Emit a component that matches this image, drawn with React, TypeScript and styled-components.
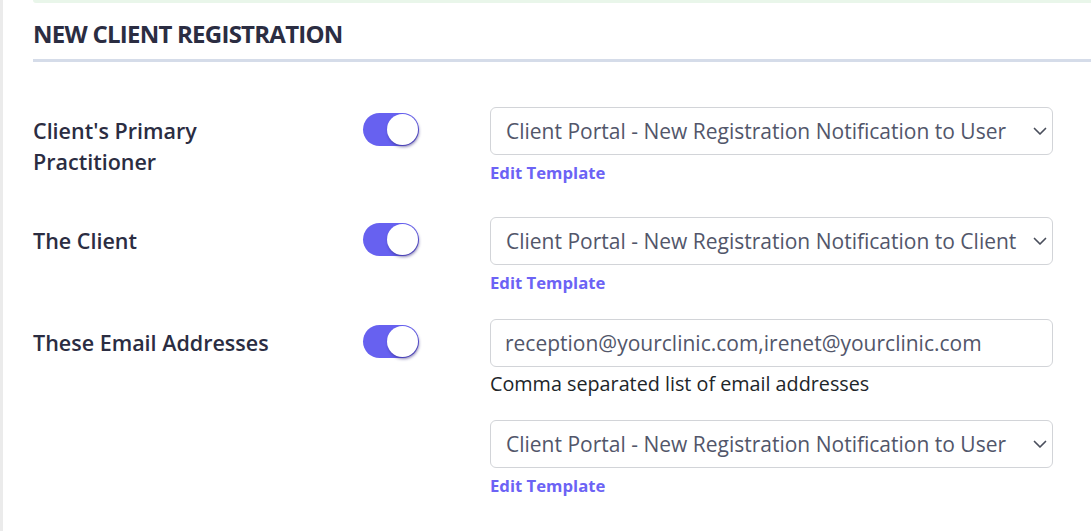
import styled, { createGlobalStyle } from "styled-components";

const GlobalStyle = createGlobalStyle`
  html, body {
    margin: 0;
    padding: 0;
    background: #ffffff;
  }
  body {
    font-family: "Open Sans", "Noto Sans", "Liberation Sans", sans-serif;
    color: #2b2d42;
  }
`;

interface Recipient {
  label: string;
  enabled: boolean;
  emails?: string;
  template: string;
}

const recipients: Recipient[] = [
  {
    label: "Client's Primary Practitioner",
    enabled: true,
    template: "Client Portal - New Registration Notification to User",
  },
  {
    label: "The Client",
    enabled: true,
    template: "Client Portal - New Registration Notification to Client",
  },
  {
    label: "These Email Addresses",
    enabled: true,
    emails: "reception@yourclinic.com,irenet@yourclinic.com",
    template: "Client Portal - New Registration Notification to User",
  },
];

function Chevron() {
  return (
    <ChevronIcon viewBox="0 0 16 16" width="16" height="16" aria-hidden>
      <path
        d="M2.5 5.5 8 11l5.5-5.5"
        fill="none"
        stroke="#4a4f5c"
        strokeWidth="1.7"
        strokeLinecap="round"
        strokeLinejoin="round"
      />
    </ChevronIcon>
  );
}

function TemplatePicker({ value }: { value: string }) {
  return (
    <>
      <SelectWrap>
        <Select defaultValue={value}>
          <option>{value}</option>
        </Select>
        <Chevron />
      </SelectWrap>
      <EditLink href="#">Edit Template</EditLink>
    </>
  );
}

function RecipientRow({ item }: { item: Recipient }) {
  return (
    <Row>
      <Label>{item.label}</Label>
      <Switch $on={item.enabled}>
        <Knob />
      </Switch>
      <Controls>
        {item.emails !== undefined && (
          <>
            <TextInput defaultValue={item.emails} />
            <HelpText>Comma separated list of email addresses</HelpText>
          </>
        )}
        <TemplatePicker value={item.template} />
      </Controls>
    </Row>
  );
}

export default function App() {
  return (
    <>
      <GlobalStyle />
      <Page>
        <PrevCardEdge />
        <Section>
          <Heading>NEW CLIENT REGISTRATION</Heading>
          <Rows>
            {recipients.map((r) => (
              <RecipientRow key={r.label} item={r} />
            ))}
          </Rows>
        </Section>
      </Page>
    </>
  );
}

const Page = styled.div`
  min-height: 531px;
  border-left: 3px solid #ebebeb;
  box-sizing: border-box;
`;

const PrevCardEdge = styled.div`
  height: 3px;
  margin-left: 30px;
  background: #e9f6ea;
  border-bottom-left-radius: 4px;
`;

const Section = styled.section`
  padding: 0 38px 0 30px;
`;

const Heading = styled.h2`
  margin: 0 -38px 0 0;
  padding: 16px 0 11px;
  font-size: 24px;
  line-height: 29px;
  font-weight: 700;
  letter-spacing: -0.75px;
  color: #2b2d42;
  border-bottom: 3px solid #d5dce9;
`;

const Rows = styled.div`
  display: flex;
  flex-direction: column;
  gap: 24px;
  padding-top: 45px;
`;

const Row = styled.div`
  display: grid;
  grid-template-columns: 330px 127px 1fr;
  align-items: start;
`;

const Label = styled.div`
  padding: 7.5px 0 16.5px;
  width: 250px;
  font-size: 21.5px;
  line-height: 31px;
  font-weight: 600;
  color: #2b2d42;
`;

const Switch = styled.div<{ $on: boolean }>`
  width: 56px;
  height: 33px;
  margin-top: 6px;
  border-radius: 17px;
  box-sizing: border-box;
  padding: 1px;
  background: ${(p) => (p.$on ? "#6761f0" : "#d9dbe3")};
  display: flex;
  justify-content: ${(p) => (p.$on ? "flex-end" : "flex-start")};
`;

const Knob = styled.span`
  width: 31px;
  height: 31px;
  border-radius: 50%;
  background: #ffffff;
  box-shadow: 1px 2px 3px rgba(40, 30, 120, 0.55);
`;

const Controls = styled.div`
  display: flex;
  flex-direction: column;
  align-items: flex-start;
`;

const SelectWrap = styled.div`
  position: relative;
  width: 100%;
`;

const fieldBase = `
  width: 100%;
  height: 48px;
  box-sizing: border-box;
  border: 1.25px solid #d2d4d8;
  border-radius: 6px;
  background: #ffffff;
  font-family: "Open Sans", "Noto Sans", "Liberation Sans", sans-serif;
  font-size: 21px;
  color: #52566a;
  outline: none;
`;

const Select = styled.select`
  ${fieldBase}
  appearance: none;
  -webkit-appearance: none;
  padding: 0 26px 0 15px;
`;

const ChevronIcon = styled.svg`
  position: absolute;
  right: 5px;
  top: 16px;
  pointer-events: none;
`;

const TextInput = styled.input`
  ${fieldBase}
  padding: 0 14px;
`;

const HelpText = styled.div`
  margin: 3.5px 0 23.5px;
  font-size: 19.75px;
  line-height: 26px;
  color: #212529;
`;

const EditLink = styled.a`
  margin-top: 6px;
  font-size: 16.7px;
  line-height: 24px;
  font-weight: 700;
  color: #6c63f5;
  text-decoration: none;
`;
